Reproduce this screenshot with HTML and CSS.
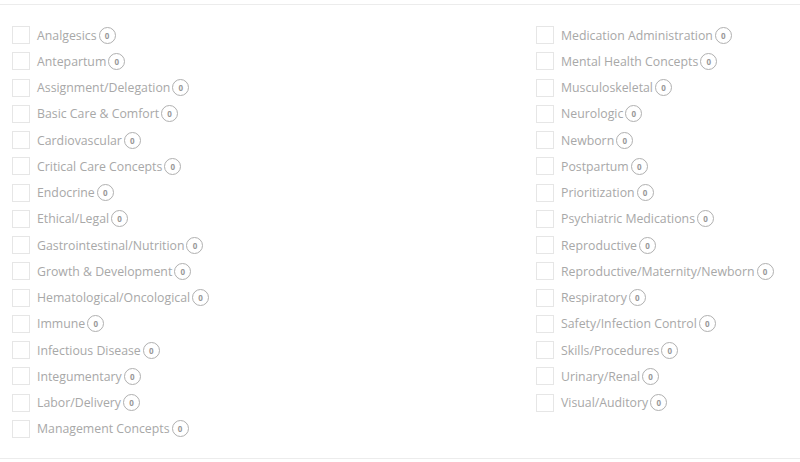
FILE: index.html
```html
<!DOCTYPE html>
<html lang="en">
<head>
    <meta charset="UTF-8">
    <title>Categories</title>
    <link rel="stylesheet" href="styles.css">
</head>
<body>
    <div class="panel">
        <div class="cat-grid">
            <ul class="cat-list">
                <li class="cat-item"><span class="cat-box"></span><span class="cat-name">Analgesics</span><span class="cat-count">0</span></li>
                <li class="cat-item"><span class="cat-box"></span><span class="cat-name">Antepartum</span><span class="cat-count">0</span></li>
                <li class="cat-item"><span class="cat-box"></span><span class="cat-name">Assignment/Delegation</span><span class="cat-count">0</span></li>
                <li class="cat-item"><span class="cat-box"></span><span class="cat-name">Basic Care &amp; Comfort</span><span class="cat-count">0</span></li>
                <li class="cat-item"><span class="cat-box"></span><span class="cat-name">Cardiovascular</span><span class="cat-count">0</span></li>
                <li class="cat-item"><span class="cat-box"></span><span class="cat-name">Critical Care Concepts</span><span class="cat-count">0</span></li>
                <li class="cat-item"><span class="cat-box"></span><span class="cat-name">Endocrine</span><span class="cat-count">0</span></li>
                <li class="cat-item"><span class="cat-box"></span><span class="cat-name">Ethical/Legal</span><span class="cat-count">0</span></li>
                <li class="cat-item"><span class="cat-box"></span><span class="cat-name">Gastrointestinal/Nutrition</span><span class="cat-count">0</span></li>
                <li class="cat-item"><span class="cat-box"></span><span class="cat-name">Growth &amp; Development</span><span class="cat-count">0</span></li>
                <li class="cat-item"><span class="cat-box"></span><span class="cat-name">Hematological/Oncological</span><span class="cat-count">0</span></li>
                <li class="cat-item"><span class="cat-box"></span><span class="cat-name">Immune</span><span class="cat-count">0</span></li>
                <li class="cat-item"><span class="cat-box"></span><span class="cat-name">Infectious Disease</span><span class="cat-count">0</span></li>
                <li class="cat-item"><span class="cat-box"></span><span class="cat-name">Integumentary</span><span class="cat-count">0</span></li>
                <li class="cat-item"><span class="cat-box"></span><span class="cat-name">Labor/Delivery</span><span class="cat-count">0</span></li>
                <li class="cat-item"><span class="cat-box"></span><span class="cat-name">Management Concepts</span><span class="cat-count">0</span></li>
            </ul>
            <ul class="cat-list">
                <li class="cat-item"><span class="cat-box"></span><span class="cat-name">Medication Administration</span><span class="cat-count">0</span></li>
                <li class="cat-item"><span class="cat-box"></span><span class="cat-name">Mental Health Concepts</span><span class="cat-count">0</span></li>
                <li class="cat-item"><span class="cat-box"></span><span class="cat-name">Musculoskeletal</span><span class="cat-count">0</span></li>
                <li class="cat-item"><span class="cat-box"></span><span class="cat-name">Neurologic</span><span class="cat-count">0</span></li>
                <li class="cat-item"><span class="cat-box"></span><span class="cat-name">Newborn</span><span class="cat-count">0</span></li>
                <li class="cat-item"><span class="cat-box"></span><span class="cat-name">Postpartum</span><span class="cat-count">0</span></li>
                <li class="cat-item"><span class="cat-box"></span><span class="cat-name">Prioritization</span><span class="cat-count">0</span></li>
                <li class="cat-item"><span class="cat-box"></span><span class="cat-name">Psychiatric Medications</span><span class="cat-count">0</span></li>
                <li class="cat-item"><span class="cat-box"></span><span class="cat-name">Reproductive</span><span class="cat-count">0</span></li>
                <li class="cat-item"><span class="cat-box"></span><span class="cat-name">Reproductive/Maternity/Newborn</span><span class="cat-count">0</span></li>
                <li class="cat-item"><span class="cat-box"></span><span class="cat-name">Respiratory</span><span class="cat-count">0</span></li>
                <li class="cat-item"><span class="cat-box"></span><span class="cat-name">Safety/Infection Control</span><span class="cat-count">0</span></li>
                <li class="cat-item"><span class="cat-box"></span><span class="cat-name">Skills/Procedures</span><span class="cat-count">0</span></li>
                <li class="cat-item"><span class="cat-box"></span><span class="cat-name">Urinary/Renal</span><span class="cat-count">0</span></li>
                <li class="cat-item"><span class="cat-box"></span><span class="cat-name">Visual/Auditory</span><span class="cat-count">0</span></li>
            </ul>
        </div>
    </div>
</body>
</html>
```

FILE: styles.css
```css
body {
    margin: 0;
    background-color: #fff;
    font-family: 'Open Sans', 'Liberation Sans', sans-serif;
    font-size: 12.3px;
    color: #a8a8a8;
}

.panel {
    margin-top: 4px;
    border-top: 1px solid #ececec;
    border-bottom: 1px solid #ececec;
    padding: 17px 12px 16px;
}

.cat-grid {
    display: grid;
    grid-template-columns: 524px 1fr;
}

.cat-list {
    list-style: none;
    margin: 0;
    padding: 0;
}

.cat-item {
    display: flex;
    align-items: center;
    height: 26.25px;
}

.cat-box {
    width: 16px;
    height: 16px;
    border: 1px solid #e6e6e6;
    margin-right: 7px;
    flex-shrink: 0;
}

.cat-name {
    white-space: nowrap;
}

.cat-count {
    display: inline-flex;
    align-items: center;
    justify-content: center;
    width: 15px;
    height: 15px;
    margin-left: 2px;
    border: 1px solid #b0b0b0;
    border-radius: 50%;
    font-size: 8px;
    font-weight: bold;
    color: #999;
}
```
